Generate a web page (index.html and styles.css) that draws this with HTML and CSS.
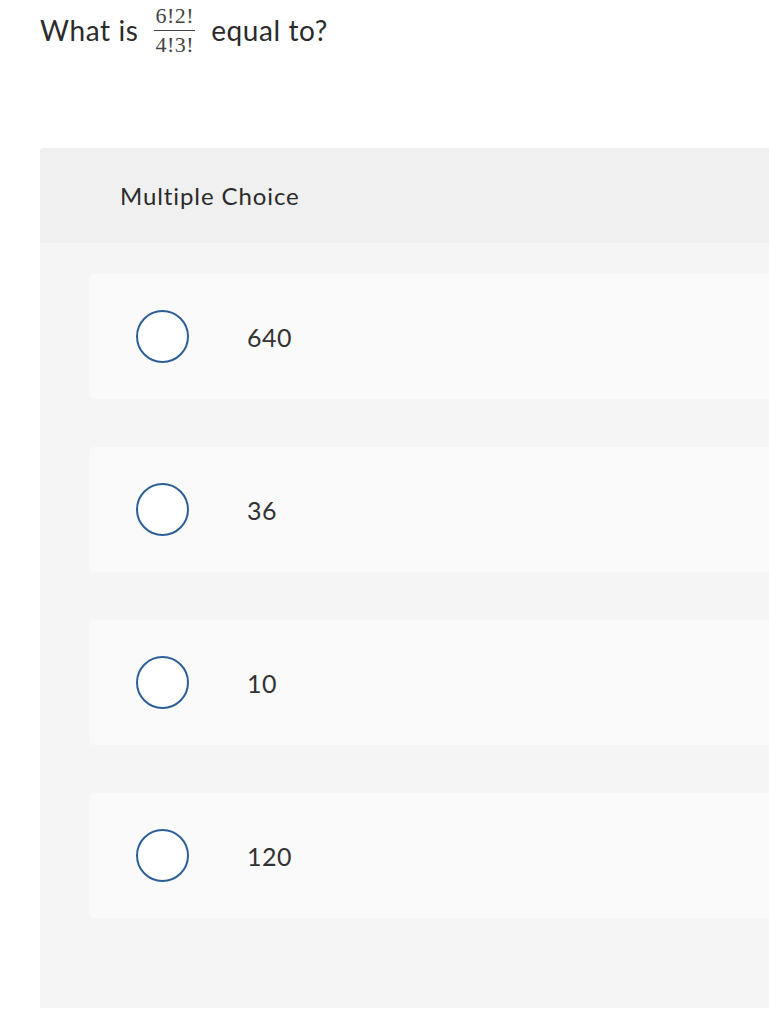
FILE: index.html
```html
<!DOCTYPE html>
<html lang="en">
<head>
  <meta charset="UTF-8" />
  <title>Question</title>
  <link rel="stylesheet" href="styles.css">
</head>
<body>

  <!-- question -->
  <div class="question">
    <span>What is</span>
    <span class="frac">
      <span class="num">6!2!</span>
      <span class="den">4!3!</span>
    </span>
    <span>equal to?</span>
  </div>

  <!-- answers -->
  <div class="choice-box">
    <div class="choice-head">Multiple Choice</div>
    <div class="choice-list">
      <div class="option"><span class="radio"></span><span class="label">640</span></div>
      <div class="option"><span class="radio"></span><span class="label">36</span></div>
      <div class="option"><span class="radio"></span><span class="label">10</span></div>
      <div class="option"><span class="radio"></span><span class="label">120</span></div>
    </div>
  </div>

</body>
</html>
```

FILE: styles.css
```css
body {
  margin:0; padding:0;
  font-family: Lato, 'Open Sans', sans-serif;
  background:#fff;
  color:#333;
  overflow:hidden;
}
.question {
  display:flex;
  align-items:center;
  gap:16px;
  padding:0 0 0 40px;
  height:59px;
  font-size:28px;
  letter-spacing:0.6px;
  color:#2b2b2b;
}
.frac {
  display:inline-flex;
  flex-direction:column;
  align-items:center;
  font-family: 'Liberation Serif', serif;
  font-size:22px;
  line-height:22px;
  letter-spacing:0.5px;
  color:#444;
  margin-top:2px;
}
.frac .num {
  padding:0 1px 3px;
  border-bottom:1px solid #444;
}
.frac .den { padding-top:3px; }
.choice-box {
  margin:89px 0 0 40px;
  width:760px;
  background:#f5f5f5;
  border-radius:4px 0 0 0;
  padding-bottom:90px;
}
.choice-head {
  background:#f0f0f0;
  border-radius:4px 0 0 0;
  height:95px;
  display:flex;
  align-items:center;
  padding-left:80px;
  font-size:24px;
  letter-spacing:0.9px;
  color:#2b2b2b;
}
.choice-list {
  display:flex;
  flex-direction:column;
  gap:48px;
  padding:31px 0 0 49px;
}
.option {
  background:#fafafa;
  border-radius:5px 0 0 5px;
  height:125px;
  display:flex;
  align-items:center;
  padding-left:47px;
}
.radio {
  width:49px;
  height:49px;
  border:2px solid #2d5f97;
  border-radius:50%;
  background:#fff;
  flex-shrink:0;
}
.label {
  margin-left:58px;
  font-size:25px;
  letter-spacing:0.5px;
  color:#333;
}
```
